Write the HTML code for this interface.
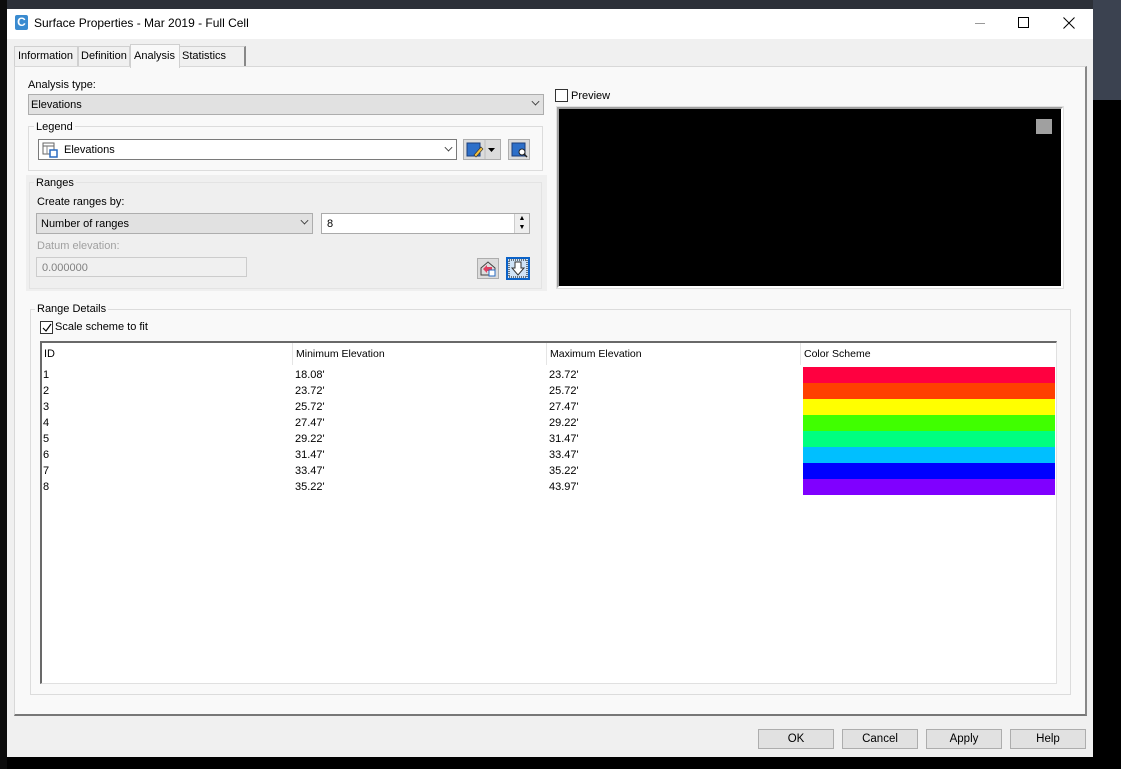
<!DOCTYPE html>
<html><head><meta charset="utf-8"><style>
*{margin:0;padding:0;box-sizing:border-box}
body{width:1121px;height:769px;background:#000;position:relative;overflow:hidden;font-family:"Liberation Sans",sans-serif;font-size:11px;color:#000}
.a{position:absolute}
.t{position:absolute;white-space:nowrap;line-height:14px}
.combo{position:absolute;background:#e1e1e1;border:1px solid #adadad}
.inp{position:absolute;background:#fff;border:1px solid #7a7a7a}
.chev{position:absolute;right:4px;top:3px;width:7px;height:7px;border-right:1px solid #333;border-bottom:1px solid #333;transform:rotate(45deg) scale(.8)}
.grp{position:absolute;border:1px solid #dcdcdc}
.btn{position:absolute;background:#e1e1e1;border:1px solid #adadad;text-align:center;line-height:18px;font-size:11.5px}
.row{position:absolute;height:16px;line-height:16px}
</style></head><body>
<div class="a" style="left:0;top:0;width:1121px;height:9px;background:#2c3038"></div>
<div class="a" style="left:1093px;top:0;width:28px;height:100px;background:#3b4250"></div>
<div class="a" style="left:0;top:0;width:7px;height:769px;background:#0c0c0c"></div>
<div class="a" style="left:7px;top:9px;width:1086px;height:748px;background:#f0f0f0"></div>
<div class="a" style="left:7px;top:9px;width:1086px;height:30px;background:#fff"></div>
<div class="a" style="left:15px;top:15px;width:13px;height:15px;background:#3a8bd0;color:#fff;font-weight:bold;font-size:12px;line-height:15px;text-align:center;border-radius:2px">C</div>
<div class="t" style="left:34px;top:16px;font-size:12px">Surface Properties - Mar 2019 - Full Cell</div>
<div class="a" style="left:975px;top:23px;width:10px;height:1px;background:#999"></div>
<div class="a" style="left:1018px;top:17px;width:11px;height:11px;border:1px solid #000"></div>
<svg class="a" style="left:1063px;top:17px" width="12" height="12"><path d="M0.5 0.5 L11.5 11.5 M11.5 0.5 L0.5 11.5" stroke="#000" stroke-width="1"/></svg>
<div class="a" style="left:14px;top:46px;width:64px;height:21px;border:1px solid #d0d0d0;background:#f0f0f0"></div>
<div class="t" style="left:18px;top:49px">Information</div>
<div class="a" style="left:78px;top:46px;width:52px;height:21px;border:1px solid #d0d0d0;background:#f0f0f0"></div>
<div class="t" style="left:81px;top:49px">Definition</div>
<div class="a" style="left:179px;top:46px;width:67px;height:21px;border:1px solid #d0d0d0;border-right:2px solid #888;background:#f0f0f0"></div>
<div class="t" style="left:182px;top:49px">Statistics</div>
<div class="a" style="left:14px;top:66px;width:1073px;height:650px;background:#f9f9f9;border:1px solid #d8d8d8;border-right:2px solid #888;border-bottom:2px solid #777"></div>
<div class="a" style="left:130px;top:44px;width:50px;height:24px;background:#f9f9f9;border:1px solid #d0d0d0;border-bottom:none"></div>
<div class="t" style="left:134px;top:49px">Analysis</div>
<div class="t" style="left:28px;top:78px">Analysis type:</div>
<div class="combo" style="left:28px;top:94px;width:516px;height:21px"><div class="t" style="left:2px;top:3px">Elevations</div><div class="chev"></div></div>
<div class="grp" style="left:28px;top:126px;width:515px;height:45px"></div>
<div class="t" style="left:34px;top:120px;background:#f9f9f9;padding:0 2px">Legend</div>
<div class="inp" style="left:38px;top:139px;width:419px;height:21px"><svg class="a" style="left:3px;top:2px" width="16" height="16"><rect x="1" y="1" width="11" height="11" fill="#fff" stroke="#666"/><line x1="1" y1="4" x2="12" y2="4" stroke="#666"/><line x1="5" y1="4" x2="5" y2="12" stroke="#888"/><rect x="8" y="8" width="7" height="7" fill="#fff" stroke="#2a6bc0" stroke-width="1.5"/></svg><div class="t" style="left:25px;top:3px">Elevations</div><div class="chev" style="top:4px"></div></div>
<div class="a" style="left:463px;top:139px;width:38px;height:21px;background:#dcdcdc;border:1px solid #adadad"><svg width="36" height="19"><rect x="3" y="3" width="13" height="13" fill="#2d6fc9" stroke="#1a3e7a"/><path d="M10 15 L17 7 L19 9 L12 17Z" fill="#f0c040" stroke="#333" stroke-width=".6"/><path d="M24 8 L31 8 L27.5 12Z" fill="#000"/><line x1="21" y1="0" x2="21" y2="19" stroke="#bbb"/></svg></div>
<div class="a" style="left:508px;top:139px;width:22px;height:21px;background:#dcdcdc;border:1px solid #adadad"><svg width="20" height="19"><rect x="3" y="3" width="13" height="13" fill="#2d6fc9" stroke="#1a3e7a"/><circle cx="13" cy="12" r="3" fill="#fff" stroke="#222"/><line x1="15" y1="14" x2="18" y2="17" stroke="#222" stroke-width="1.5"/></svg></div>
<div class="a" style="left:26px;top:175px;width:521px;height:116px;background:#efefef"></div>
<div class="grp" style="left:29px;top:182px;width:513px;height:107px;border-color:#e3e3e3"></div>
<div class="t" style="left:34px;top:176px;background:#efefef;padding:0 2px">Ranges</div>
<div class="t" style="left:37px;top:195px">Create ranges by:</div>
<div class="combo" style="left:36px;top:213px;width:277px;height:21px"><div class="t" style="left:4px;top:3px">Number of ranges</div><div class="chev"></div></div>
<div class="inp" style="left:321px;top:213px;width:209px;height:21px;border-color:#aaa"><div class="t" style="left:5px;top:3px">8</div><div class="a" style="right:0;top:0;width:15px;height:19px;background:#eee;border-left:1px solid #ccc;font-size:7px;line-height:9px;text-align:center">▲<br>▼</div></div>
<div class="t" style="left:37px;top:239px;color:#a0a0a0">Datum elevation:</div>
<div class="a" style="left:36px;top:257px;width:211px;height:20px;background:#f0f0f0;border:1px solid #ccc"><div class="t" style="left:5px;top:3px;color:#808080">0.000000</div></div>
<div class="a" style="left:477px;top:258px;width:22px;height:21px;background:#dcdcdc;border:1px solid #adadad"><svg width="20" height="19"><path d="M3 9 L10 3 L17 9 L17 16 L3 16Z" fill="#ddd" stroke="#444"/><path d="M5 10 L9 6 L9 8 L14 8 L14 12 L9 12 L9 14Z" fill="#e04060"/><rect x="11" y="11" width="6" height="6" fill="#fff" stroke="#2a6bc0"/></svg></div>
<div class="a" style="left:506px;top:257px;width:24px;height:23px;background:#cfe3f7;border:2px solid #0a62c8"><svg width="20" height="19"><rect x="1" y="1" width="18" height="17" fill="none" stroke="#000" stroke-dasharray="1 1"/><path d="M7 3 L13 3 L13 9 L16 9 L10 16 L4 9 L7 9Z" fill="#fff" stroke="#333"/></svg></div>
<div class="a" style="left:555px;top:89px;width:13px;height:13px;background:#fff;border:1px solid #333"></div>
<div class="t" style="left:571px;top:89px">Preview</div>
<div class="a" style="left:557px;top:107px;width:506px;height:181px;border:2px solid #a0a0a0;border-right-color:#fff;border-bottom-color:#fff;background:#000;outline:1px solid #e0e0e0"></div>
<div class="a" style="left:1036px;top:119px;width:16px;height:15px;background:#a0a0a0"></div>
<div class="grp" style="left:30px;top:309px;width:1041px;height:386px"></div>
<div class="t" style="left:35px;top:302px;background:#f9f9f9;padding:0 2px">Range Details</div>
<div class="a" style="left:40px;top:321px;width:13px;height:13px;background:#fff;border:1px solid #333"><svg class="a" style="left:1px;top:1px" width="10" height="10"><path d="M1 5 L4 8 L9 1" fill="none" stroke="#000" stroke-width="1.2"/></svg></div>
<div class="t" style="left:55px;top:320px">Scale scheme to fit</div>
<div class="a" style="left:40px;top:341px;width:1017px;height:343px;background:#fff;border-top:2px solid #696969;border-left:2px solid #696969;border-right:1px solid #e0e0e0;border-bottom:1px solid #e0e0e0"></div>
<div class="a" style="left:292px;top:343px;width:1px;height:22px;background:#e5e5e5"></div>
<div class="a" style="left:546px;top:343px;width:1px;height:22px;background:#e5e5e5"></div>
<div class="a" style="left:800px;top:343px;width:1px;height:22px;background:#e5e5e5"></div>
<div class="t" style="left:44px;top:347px">ID</div>
<div class="t" style="left:296px;top:347px;font-size:10.5px">Minimum Elevation</div>
<div class="t" style="left:550px;top:347px;font-size:10.5px">Maximum Elevation</div>
<div class="t" style="left:804px;top:347px;font-size:10.5px">Color Scheme</div>
<div class="a" style="left:43px;top:367px;font-size:11px">
<div class="row" style="top:0">1</div><div class="row" style="top:16px">2</div><div class="row" style="top:32px">3</div><div class="row" style="top:48px">4</div><div class="row" style="top:64px">5</div><div class="row" style="top:80px">6</div><div class="row" style="top:96px">7</div><div class="row" style="top:112px">8</div>
<div class="row" style="left:252px;top:0">18.08'</div><div class="row" style="left:252px;top:16px">23.72'</div><div class="row" style="left:252px;top:32px">25.72'</div><div class="row" style="left:252px;top:48px">27.47'</div><div class="row" style="left:252px;top:64px">29.22'</div><div class="row" style="left:252px;top:80px">31.47'</div><div class="row" style="left:252px;top:96px">33.47'</div><div class="row" style="left:252px;top:112px">35.22'</div>
<div class="row" style="left:506px;top:0">23.72'</div><div class="row" style="left:506px;top:16px">25.72'</div><div class="row" style="left:506px;top:32px">27.47'</div><div class="row" style="left:506px;top:48px">29.22'</div><div class="row" style="left:506px;top:64px">31.47'</div><div class="row" style="left:506px;top:80px">33.47'</div><div class="row" style="left:506px;top:96px">35.22'</div><div class="row" style="left:506px;top:112px">43.97'</div>
</div>
<div class="a" style="left:803px;top:367px;width:252px">
<div style="height:16px;background:#ff0040"></div><div style="height:16px;background:#ff4000"></div><div style="height:16px;background:#ffff00"></div><div style="height:16px;background:#40ff00"></div><div style="height:16px;background:#00ff80"></div><div style="height:16px;background:#00bfff"></div><div style="height:16px;background:#0000ff"></div><div style="height:16px;background:#8000ff"></div>
</div>
<div class="btn" style="left:758px;top:729px;width:76px;height:20px">OK</div>
<div class="btn" style="left:842px;top:729px;width:76px;height:20px">Cancel</div>
<div class="btn" style="left:926px;top:729px;width:76px;height:20px">Apply</div>
<div class="btn" style="left:1010px;top:729px;width:76px;height:20px">Help</div>
</body></html>
